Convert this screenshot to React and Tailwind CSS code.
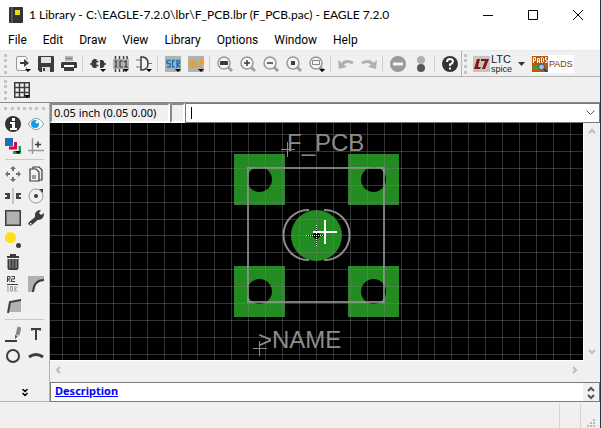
import { Fragment } from "react";

const menus = ["File", "Edit", "Draw", "View", "Library", "Options", "Window", "Help"];

function Svg({ children, w = 16, h = 16 }) {
  return (
    <svg width={w} height={h} viewBox={`0 0 ${w} ${h}`} fill="none" stroke="#3c3c3c" strokeWidth="1.5" className="block shrink-0">
      {children}
    </svg>
  );
}

// small black triangle for tools that open a menu
function Drop() {
  return <path d="M10 13h6l-3 3z" fill="#000" stroke="none" />;
}

function Zoom({ children }) {
  return (
    <Svg>
      <path d="M11 11l4 4" stroke="#a0a0a0" strokeWidth="3" />
      <circle cx="7" cy="7" r="6" stroke="#999" fill="#f5f5f5" />
      {children}
    </Svg>
  );
}

const icons = {
  open: (
    <Svg>
      <path d="M12 4V2L10.500 .5H3Q1.500 .5 1.500 2v11q0 1.500 1.500 1.500h7q1.500 0 1.500-1.500v-2" stroke="#999" strokeWidth="1" fill="#f7f7f7" />
      <path d="M5 7h5" strokeWidth="2" />
      <path d="M9 3l5 4-5 4z" fill="#3c3c3c" stroke="none" />
      <Drop />
    </Svg>
  ),
  save: (
    <Svg>
      <path d="M0 1q0-1 1-1h14q1 0 1 1v14q0 1-1 1H2l-2-2z" fill="#3c3c3c" stroke="none" />
      <path d="M3 1h10v6H3zM4 11h8v5H4z" fill="#e4e4e4" stroke="none" />
      <path d="M5 12h2v3H5z" fill="#3c3c3c" stroke="none" />
    </Svg>
  ),
  print: (
    <Svg>
      <path d="M4 0h8v5H4z" fill="#b5b5b5" stroke="none" />
      <path d="M5 2.500h6" stroke="#777" strokeWidth="1" />
      <path d="M1 6h14l1 1v5H0V7z" fill="#3c3c3c" stroke="none" />
      <path d="M3 9h10v2H3z" fill="#fff" stroke="none" />
      <path d="M3 11h10v4H3z" fill="#3c3c3c" stroke="none" />
    </Svg>
  ),
  plug: (
    <Svg>
      <path d="M0 8h2M6 5.500h2.500M6 9.500h2.500M14 8h2" strokeWidth="1.500" />
      <path d="M6.500 3v9H5Q1.500 12 1.500 7.500 1.500 3 5 3zM10 4h1.500Q14.500 4 14.500 8t-3 4H10z" fill="#3c3c3c" stroke="none" />
      <Drop />
    </Svg>
  ),
  ic: (
    <Svg>
      <path d="M0 3h16v10H0z" fill="#b3b3b3" stroke="none" />
      <path d="M2.500 0v3M6.500 0v3M10.500 0v3M14 0v3M2.500 13v3M6.500 13v3M10.500 13v3" />
      <path d="M1.500 5h3M1.500 11h3M3 5v6M10 5H7v6h3M11 6l2-1v6M11 11h4" strokeWidth="1.200" />
      <Drop />
    </Svg>
  ),
  gate: (
    <Svg>
      <path d="M0 4h5M0 11h5M12 7.500h4" stroke="#777" strokeWidth="1" />
      <path d="M5 1h2q5 1 5 6.500T7 14H5z" strokeWidth="1.500" fill="#f5f5f5" />
      <Drop />
    </Svg>
  ),
  scr: (
    <Svg>
      <path d="M0 0h16v16H0z" fill="#b1b1b1" stroke="none" />
      <path d="M5.500 4.500H2v3h3v3.500H1.500M10 4.500H7.500V11H10M12 12V4.500h2.500v3H12l3 4" stroke="#1878be" />
      <Drop />
    </Svg>
  ),
  ulp: (
    <Svg>
      <path d="M0 0h16v16H0z" fill="#b1b1b1" stroke="none" />
      <path d="M2 4v7h3V4M7.500 4v7h3M12 12V4.500h2.500v3H12" stroke="#f39a12" />
      <Drop />
    </Svg>
  ),
  zoomFit: <Zoom><path d="M3 5h8v4H3z" fill="#3c3c3c" stroke="none" /></Zoom>,
  zoomIn: <Zoom><path d="M4 7h6M7 4v6" /></Zoom>,
  zoomOut: <Zoom><path d="M4 7h6" /></Zoom>,
  redraw: <Zoom><path d="M5 5h4v4H5z" fill="#3c3c3c" stroke="none" /></Zoom>,
  zoomSel: <Zoom><path d="M3.500 4.500h7v4h-7z" stroke="#888" strokeWidth="1" /><Drop /></Zoom>,
  undo: (
    <Svg>
      <path d="M3 10q4-7 12-3" stroke="#b0b0b0" strokeWidth="3" />
      <path d="M0 4l1 9 8-2z" fill="#b0b0b0" stroke="none" />
    </Svg>
  ),
  redo: (
    <Svg>
      <path d="M13 10Q9 3 1 7" stroke="#b0b0b0" strokeWidth="3" />
      <path d="M16 4l-1 9-8-2z" fill="#b0b0b0" stroke="none" />
    </Svg>
  ),
  stop: (
    <Svg>
      <circle cx="8" cy="8" r="8" fill="#999" stroke="none" />
      <path d="M3 8h10" stroke="#f4f4f4" strokeWidth="3" />
    </Svg>
  ),
  go: (
    <Svg>
      <circle cx="8" cy="4" r="4" fill="#b0b0b0" stroke="none" />
      <circle cx="8" cy="12" r="4" fill="#555" stroke="none" />
    </Svg>
  ),
  help: (
    <Svg>
      <circle cx="8" cy="8" r="8" fill="#333" stroke="none" />
      <path d="M5 6q0-3 3-3t3 2.500Q11 7 8 8.500V10" stroke="#fff" strokeWidth="2" />
      <path d="M7 11.500h2v2H7z" fill="#fff" stroke="none" />
    </Svg>
  ),
  grid: (
    <Svg>
      <path d="M.75.75h14.500v14.500H.75zM5.500 1v14M10.500 1v14M1 5.500h14M1 10.500h14" />
      <Drop />
    </Svg>
  ),
  info: (
    <Svg>
      <circle cx="8" cy="8" r="8" fill="#333" stroke="none" />
      <path d="M7 2h3v3H7zM5 6h5v6h2v2H5v-2h2V8H5z" fill="#fff" stroke="none" />
    </Svg>
  ),
  eye: (
    <Svg>
      <path d="M.5 8Q3 2.500 8 2.500T15.500 8Q13 13.500 8 13.500T.5 8z" fill="#fff" stroke="#999" strokeWidth="1" />
      <circle cx="7" cy="8" r="4" fill="#0b9cea" stroke="none" />
      <circle cx="9" cy="6" r="1.500" fill="#fff" stroke="none" />
    </Svg>
  ),
  layers: (
    <Svg>
      <path d="M0 0h8v8H0z" fill="#1d6fb8" stroke="none" />
      <path d="M10.500 4v6H4" stroke="#d3074b" strokeWidth="3" />
      <path d="M15 8v6.500H8" stroke="#2c9b54" strokeWidth="3" />
      <Drop />
    </Svg>
  ),
  mark: (
    <Svg>
      <path d="M4.500 0v16M0 12.500h16" stroke="#999" />
      <path d="M7 6.500h6M10 3.500v6" />
    </Svg>
  ),
  move: (
    <Svg>
      <path d="M8 0l3 3H9v2H7V3H5zM8 16l-3-3h2v-2h2v2h2zM0 8l3-3v2h2v2H3v2zM16 8l-3 3V9h-2V7h2V5z" fill="#707070" stroke="none" />
    </Svg>
  ),
  copy: (
    <Svg>
      <path d="M5 1h6l3 3v10H5z" fill="#eee" strokeWidth="1.200" />
      <path d="M2 3h6l3 3v9H2z" fill="#f2f2f2" strokeWidth="1.200" />
      <path d="M4 9h4v4H4z" fill="#999" stroke="none" />
    </Svg>
  ),
  mirror: (
    <Svg>
      <path d="M8 0v16" stroke="#999" strokeWidth="1" />
      <path d="M0 5h5v6H0v-2h2V7H0zM16 5h-5v6h5v-2h-2V7h2z" fill="#444" stroke="none" />
    </Svg>
  ),
  rotate: (
    <Svg>
      <circle cx="8" cy="8" r="7" stroke="#999" strokeWidth="1" />
      <circle cx="8" cy="8" r="2" fill="#3c3c3c" stroke="none" />
      <path d="M11 1h4v4l-2-2z" fill="#3c3c3c" stroke="none" />
    </Svg>
  ),
  group: <Svg><path d="M.75.75h14.500v14.500H.75z" fill="#b1b1b1" /></Svg>,
  wrench: (
    <Svg>
      <path d="M2.500 13.500l7-6" strokeWidth="4" strokeLinecap="round" />
      <path d="M7 8V4q1-4 6-4l-2 3 2 2 3-2q0 6-5 7z" fill="#3c3c3c" stroke="none" />
      <path d="M2 13h1.500v1.500H2z" fill="#fff" stroke="none" />
    </Svg>
  ),
  color: (
    <Svg>
      <circle cx="5.500" cy="5.500" r="5.500" fill="#ffdd1a" stroke="none" />
      <circle cx="13.500" cy="13.500" r="2.500" fill="#3c3c3c" stroke="none" />
    </Svg>
  ),
  trash: (
    <Svg>
      <path d="M2 3h12M5 1h6M3.500 5v9q0 1 1 1h7q1 0 1-1V5" strokeWidth="2" />
      <path d="M4 5h8v9H4z" fill="#777" stroke="none" />
      <path d="M6.500 5v9M9.500 5v9" />
    </Svg>
  ),
  name: (
    <Svg>
      <path d="M2.500 6V.5h2.500v2.500h-2.500l3 3M6.500 .5H9.500v2.500h-3v2.500h3.500" strokeWidth="1" />
      <path d="M2 8.500h11" strokeWidth="1" />
      <path d="M2 11l1-.5V16M5.500 10.500h2V15h-2zM10 10v6M12.500 11L10 13l2.500 2.500" stroke="#999" strokeWidth="1" />
    </Svg>
  ),
  miter: (
    <Svg>
      <path d="M0 0h16v4Q6 4 6 16H0z" fill="#b1b1b1" stroke="none" />
      <path d="M16 4Q6 4 5 16" strokeWidth="2" />
    </Svg>
  ),
  split: (
    <Svg>
      <path d="M5 4l11-2v12H3z" fill="#b1b1b1" stroke="none" />
      <path d="M3 15L5 4l11-2" strokeWidth="2" />
    </Svg>
  ),
  wire: (
    <Svg>
      <path d="M0 15h12" strokeWidth="2" />
      <path d="M14.500 1l-2 8" stroke="#888" strokeWidth="4" />
      <path d="M10 9l3 1-3 3z" fill="#555" stroke="none" />
    </Svg>
  ),
  text: <Svg><path d="M4 4.500V3h8v1.500M8 3v11" strokeWidth="2" /></Svg>,
  circle: <Svg><circle cx="8" cy="8" r="6" strokeWidth="2" /></Svg>,
  arc: <Svg><path d="M1 9q7-5 14 0" strokeWidth="3" /></Svg>,
};

const toolGroups = [
  ["open", "save", "print"],
  ["plug", "ic", "gate"],
  ["scr", "ulp"],
  ["zoomFit", "zoomIn", "zoomOut", "redraw", "zoomSel"],
  ["undo", "redo"],
  ["stop", "go"],
  ["help"],
];

const sideGroups = [
  ["info", "eye", "layers", "mark"],
  ["move", "copy", "mirror", "rotate", "group", "wrench", "color", null, "trash", null, "name", "miter", "split", null],
  ["wire", "text", "circle", "arc"],
];

function Tool({ name }) {
  return (
    <button aria-label={name} className="flex h-[22px] w-[23px] shrink-0 items-center justify-center">
      {icons[name]}
    </button>
  );
}

function Handle() {
  return <div className="h-5 border-l-3 border-dotted border-[#c4c4c4]"></div>;
}

function Chevron({ d, color = "#bdbdbd" }) {
  return (
    <svg width="8" height="8" viewBox="0 0 8 8" fill="none" stroke={color} strokeWidth="2" className="block">
      <path d={d} />
    </svg>
  );
}

function Board() {
  const cols = Array.from({ length: 31 }, (_, i) => Math.round(12 + i * 16.93));
  const rows = Array.from({ length: 14 }, (_, i) => Math.round(11 + i * 16.9));
  const pads = [[184, 31], [298, 31], [184, 143], [298, 143]];
  return (
    <svg className="block h-[237px] min-w-0 flex-1 bg-black" fontFamily="'Liberation Sans', sans-serif">
      {pads.map(([x, y]) => (
        <g key={`${x}-${y}`}>
          <rect x={x} y={y} width="51" height="51" fill="#228b22" />
          <circle cx={x + 25.5} cy={y + 25.5} r="12.5" fill="#000" />
        </g>
      ))}
      <path d="M259 87h-1a24.500 25 0 0 0 0 50h1M274 87h1a24.500 25 0 0 1 0 50h-1" fill="none" stroke="#8c8c8c" strokeWidth="2" />
      <circle cx="266.5" cy="112.5" r="25.5" fill="#228b22" />
      <rect x="198" y="45" width="136" height="134" fill="none" stroke="#999" strokeOpacity=".8" strokeWidth="2" />
      <g fill="#808080" fillOpacity=".4">
        {cols.map((x) => <rect key={x} x={x} y="0" width="1" height="237" />)}
        {rows.map((y) => <rect key={y} x="0" y={y} width="100%" height="1" />)}
      </g>
      <g fill="#8c8c8c" fontSize="24">
        <text x="237" y="28">F_PCB</text>
        <text x="208" y="225">&gt;NAME</text>
      </g>
      <path d="M231 26.500h14M237.500 19v15M203 225.500h14M209.500 218v15" stroke="#8c8c8c" />
      {/* origin */}
      <path d="M262 112.500l4.500-4.500 4.500 4.500-4.500 4.500z" fill="#000" />
      <path d="M256 112.500h20M266.500 102v21" stroke="#000" />
      <path d="M256 112.500h20M266.500 102v21" stroke="#fff" strokeDasharray="1 1" />
      {/* cursor */}
      <path d="M263 109h24M275 97v24" stroke="#fff" strokeWidth="2" />
    </svg>
  );
}

function App() {
  return (
    <div className="border-r border-[#1f3a52] bg-[#f0f0f0] font-['Noto_Sans','Open_Sans',sans-serif] text-xs text-black">
      <header className="flex h-[29px] items-center bg-white pl-[9px] font-[Lato,sans-serif]">
        <svg width="14" height="16" viewBox="0 0 14 16">
          <rect width="14" height="16" rx="1" fill="#333" />
          <path d="M3 0v16" stroke="#777" />
          <path d="M6 3h5v5H6z" fill="#e8e000" />
        </svg>
        <h1 className="ml-1.5 flex-1 whitespace-nowrap">
          1 Library - C:\EAGLE-7.2.0\lbr\F_PCB.lbr (F_PCB.pac) - EAGLE 7.2.0
        </h1>
        <div className="flex">
          {["M3 8.500h10", "M3.500 3.500h9v9h-9z", "M3 3l10 10M13 3L3 13"].map((d, i) => (
            <button key={d} aria-label={["Minimize", "Maximize", "Close"][i]} className="flex h-7 w-[45px] items-center justify-center">
              <svg width="16" height="16" viewBox="0 0 16 16" fill="none" stroke="#000"><path d={d} /></svg>
            </button>
          ))}
        </div>
      </header>

      <nav className="flex h-[22px] items-center border-b border-[#e8e8e8] bg-white font-[Roboto,sans-serif]">
        {menus.map((m) => (
          <button key={m} className="px-2">{m}</button>
        ))}
      </nav>

      <div className="flex h-[26px] items-center border-b border-[#b4b4b4] pl-1">
        <Handle />
        <div className="ml-1 flex items-center">
          {toolGroups.map((g, i) => (
            <Fragment key={i}>
              {i > 0 && <div className="mx-[2px] h-4 w-[2px] border-l border-[#cfcfcf]"></div>}
              {g.map((n) => <Tool key={n} name={n} />)}
            </Fragment>
          ))}
        </div>
        <div className="mr-[2px] h-[25px] border-l border-[#b4b4b4]"></div>
        <Handle />
        <button aria-label="LTC spice" className="ml-[6px] flex items-center">
          <svg width="17" height="16" viewBox="0 0 17 16">
            <path d="M0 0h17v16H0z" fill="#c4c4c4" />
            <path d="M4 3h3L5 11h3l-1 2H1zM8 3h8l-4 10H9l3-8H8z" fill="#8b1414" />
          </svg>
          <span className="ml-px flex flex-col items-start font-['Liberation_Sans',sans-serif] text-[#222]">
            <span className="text-[11px] leading-[11px]">LTC</span>
            <span className="text-[9px] leading-[8px]">spice</span>
          </span>
          <svg width="7" height="4" viewBox="0 0 7 4" className="ml-[6px]"><path d="M0 0h7L3.500 4z" fill="#333" /></svg>
        </button>
        <button className="ml-[7px] flex h-[18px] items-center bg-white text-[9px] text-[#7a3a00]">
          <svg width="16" height="16" viewBox="0 0 16 16" fill="none" stroke="#fff">
            <path d="M0 0h16v16H0z" fill="#b85a0c" stroke="none" />
            <path d="M1.500 7V1.500h2v3h-2M5.500 7V2.500h2V7M5.500 5h2M9.500 1.500V6.500h1l1-1v-3l-1-1zM15 1.500h-1.500V4H15v2.500h-2" />
            <path d="M1 9h9v5H1z" fill="#2fa52b" stroke="none" />
            <circle cx="9.500" cy="11" r="3" fill="#9be" stroke="#357" />
            <path d="M12 13l3 3" stroke="#246" strokeWidth="2" />
          </svg>
          <span className="px-px font-['Liberation_Sans',sans-serif]">PADS</span>
        </button>
      </div>

      <div className="flex h-[26px] items-center border-b border-[#8a8a8a] pl-1">
        <Handle />
        <div className="ml-[3px]"><Tool name="grid" /></div>
      </div>

      <div className="flex">
        <aside className="flex w-[49px] shrink-0 flex-col border-b border-[#b4b4b4]">
          <div className="mx-1 mt-1 mb-[3px] border-t-3 border-dotted border-[#c4c4c4]"></div>
          {sideGroups.map((g, i) => (
            <Fragment key={i}>
              {i > 0 && <div className="mx-[5px] my-[2px] h-[2px] border-t border-[#c8c8c8]"></div>}
              <div className="grid grid-cols-[23px_23px] pl-px">
                {g.map((n, j) => (n ? <Tool key={j} name={n} /> : <span key={j}></span>))}
              </div>
            </Fragment>
          ))}
          <button aria-label="More tools" className="mt-auto mb-1 flex justify-center">
            <svg width="8" height="8" viewBox="0 0 8 8" fill="none" stroke="#000" strokeWidth="1.500">
              <path d="M1.500 0L4 2.500 6.500 0M1.500 4L4 6.500 6.500 4" />
            </svg>
          </button>
        </aside>

        <main className="min-w-0 flex-1 border-l border-[#b4b4b4]">
          <div className="flex h-5">
            <div className="w-[120px] border-2 border-t-[#8a8a8a] border-r-white border-b-white border-l-[#8a8a8a] pl-[2px] text-[11px] leading-4 whitespace-nowrap">
              0.05 inch (0.05 0.00)
            </div>
            <div className="w-[15px] border-2 border-t-[#8a8a8a] border-r-white border-b-white border-l-[#8a8a8a]"></div>
            <div className="relative flex min-w-0 flex-1 items-center border border-[#7a7a7a] bg-white pr-1">
              <input aria-label="Command" className="min-w-0 flex-1 bg-transparent px-1 outline-none" />
              <span className="absolute left-[5px] h-3 w-px bg-black"></span>
              <button aria-label="Command history">
                <svg width="9" height="6" viewBox="0 0 9 6" fill="none" stroke="#555"><path d="M.5.5l4 4 4-4" /></svg>
              </button>
            </div>
          </div>

          <div className="flex">
            <Board />
            <div className="flex w-[17px] shrink-0 flex-col items-center justify-between border-l border-white py-1">
              <button aria-label="Scroll up"><Chevron d="M1 6l3-3 3 3" /></button>
              <button aria-label="Scroll down"><Chevron d="M1 2l3 3 3-3" /></button>
            </div>
          </div>
          <div className="mr-[17px] flex h-[22px] items-center justify-between border-t border-white px-1 pb-1">
            <button aria-label="Scroll left"><Chevron d="M6 1L3 4l3 3" /></button>
            <button aria-label="Scroll right"><Chevron d="M2 1l3 3-3 3" /></button>
          </div>

          <div className="flex h-5 border border-[#7a7a7a] bg-white">
            <div className="flex-1 pl-1 text-[11px] leading-4">
              <a href="#description" className="font-bold text-[#0000ff] underline">Description</a>
            </div>
            <div className="flex w-4 flex-col items-center justify-between bg-[#f0f0f0] pt-[3px]">
              <button aria-label="Previous"><Chevron d="M1 5l3-3 3 3" color="#555" /></button>
              <button aria-label="Next"><Chevron d="M1 1l3 3 3-3" color="#555" /></button>
            </div>
          </div>
        </main>
      </div>

      <footer className="flex h-[26px] items-end justify-end pt-[2px]">
        <div className="h-full w-[22px] border-x border-[#d5d5d5]"></div>
        <div className="flex w-[19px] justify-center pb-px">
          <svg width="8" height="8" viewBox="0 0 8 8" fill="#b8b8b8">
            <path d="M6 0h2v2H6zM3 3h2v2H3zM6 3h2v2H6zM0 6h2v2H0zM3 6h2v2H3zM6 6h2v2H6z" />
          </svg>
        </div>
      </footer>
    </div>
  );
}

export default App;
